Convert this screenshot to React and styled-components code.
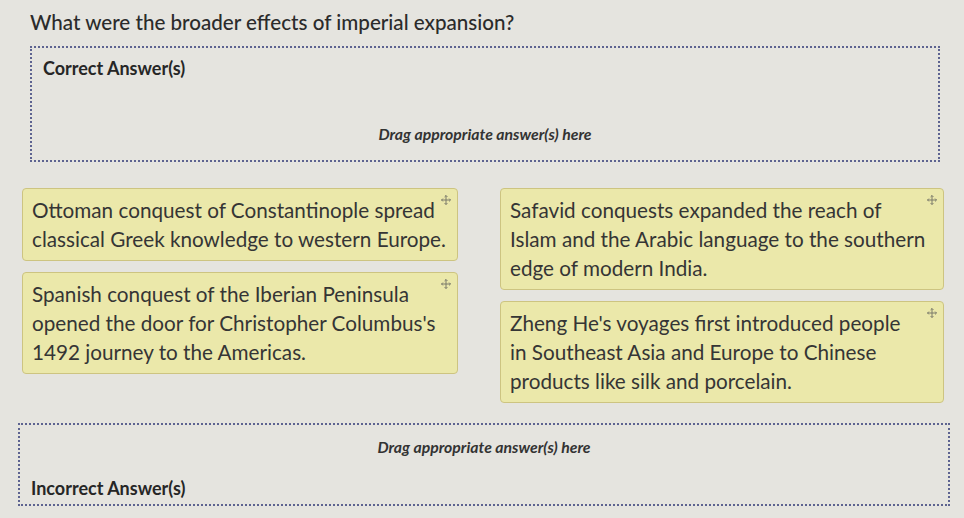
import React from "react";
import styled, { createGlobalStyle } from "styled-components";

const GlobalStyle = createGlobalStyle`
  html, body {
    margin: 0;
    background: #e5e4df;
  }
  body {
    font-family: Lato, "Open Sans", sans-serif;
    color: #2f2f2f;
  }
`;

// each answer is kept as its printed lines
const answers = {
  left: [
    ["Ottoman conquest of Constantinople spread", "classical Greek knowledge to western Europe."],
    [
      "Spanish conquest of the Iberian Peninsula",
      "opened the door for Christopher Columbus's",
      "1492 journey to the Americas.",
    ],
  ],
  right: [
    [
      "Safavid conquests expanded the reach of",
      "Islam and the Arabic language to the southern",
      "edge of modern India.",
    ],
    [
      "Zheng He's voyages first introduced people",
      "in Southeast Asia and Europe to Chinese",
      "products like silk and porcelain.",
    ],
  ],
};

const MoveIcon = () => (
  <svg width="10" height="10" viewBox="0 0 10 10" fill="none">
    <path d="M5 0.5v9M0.5 5h9" stroke="#7a7a6a" strokeWidth="1" />
    <path
      d="M3.6 1.9L5 0.5l1.4 1.4M3.6 8.1L5 9.5l1.4-1.4M1.9 3.6L0.5 5l1.4 1.4M8.1 3.6L9.5 5 8.1 6.4"
      stroke="#7a7a6a"
      strokeWidth="1"
    />
  </svg>
);

const DropZone = ({ label, labelFirst, ...rest }) => (
  <Zone {...rest}>
    {labelFirst && <ZoneLabel>{label}</ZoneLabel>}
    <ZoneHint>Drag appropriate answer(s) here</ZoneHint>
    {!labelFirst && <ZoneLabel>{label}</ZoneLabel>}
  </Zone>
);

const App = () => (
  <Page>
    <GlobalStyle />
    <Question>What were the broader effects of imperial expansion?</Question>
    <DropZone
      label="Correct Answer(s)"
      labelFirst
      $left={30}
      $right={24}
      $height={116}
      $pad="9px 11px 16px"
    />
    <AnswerGrid>
      {["left", "right"].map((side) => (
        <AnswerColumn key={side}>
          {answers[side].map((lines) => (
            <AnswerCard key={lines[0]}>
              <Handle>
                <MoveIcon />
              </Handle>
              {lines.map((line, i) => (
                <React.Fragment key={i}>
                  {i > 0 && <br />}
                  {line}
                </React.Fragment>
              ))}
            </AnswerCard>
          ))}
        </AnswerColumn>
      ))}
    </AnswerGrid>
    <DropZone
      label="Incorrect Answer(s)"
      $left={18}
      $right={14}
      $height={83}
      $pad="12px 11px 5px"
    />
  </Page>
);

const Page = styled.div`
  padding: 8px 0 10px;
`;

const Question = styled.h1`
  margin: 0 0 10px 30px;
  font-size: 20.6px;
  line-height: 28px;
  font-weight: 500;
  color: #2b2b2b;
`;

const Zone = styled.div`
  box-sizing: border-box;
  height: ${(p) => p.$height}px;
  margin: 0 ${(p) => p.$right}px 0 ${(p) => p.$left}px;
  padding: ${(p) => p.$pad};
  border: 2px dotted #5d6390;
  display: flex;
  flex-direction: column;
  justify-content: space-between;
`;

const ZoneLabel = styled.div`
  font-size: 18px;
  line-height: 22px;
  font-weight: 700;
  color: #262626;
`;

const ZoneHint = styled.div`
  text-align: center;
  font-size: 15.8px;
  line-height: 20px;
  font-weight: 700;
  font-style: italic;
  color: #333;
`;

const AnswerGrid = styled.div`
  display: grid;
  grid-template-columns: 436px 444px;
  column-gap: 42px;
  margin: 26px 0 20px 22px;
  align-items: start;
`;

const AnswerColumn = styled.div`
  display: flex;
  flex-direction: column;
  gap: 11px;
`;

const AnswerCard = styled.div`
  position: relative;
  padding: 7px 18px 6px 9px;
  background: #ebe8aa;
  border: 1px solid #cdc481;
  border-radius: 4px;
  font-size: 20.7px;
  line-height: 29px;
  white-space: nowrap;
  color: #353535;
`;

const Handle = styled.span`
  position: absolute;
  top: 6px;
  right: 6px;
  display: flex;
`;

export default App;
